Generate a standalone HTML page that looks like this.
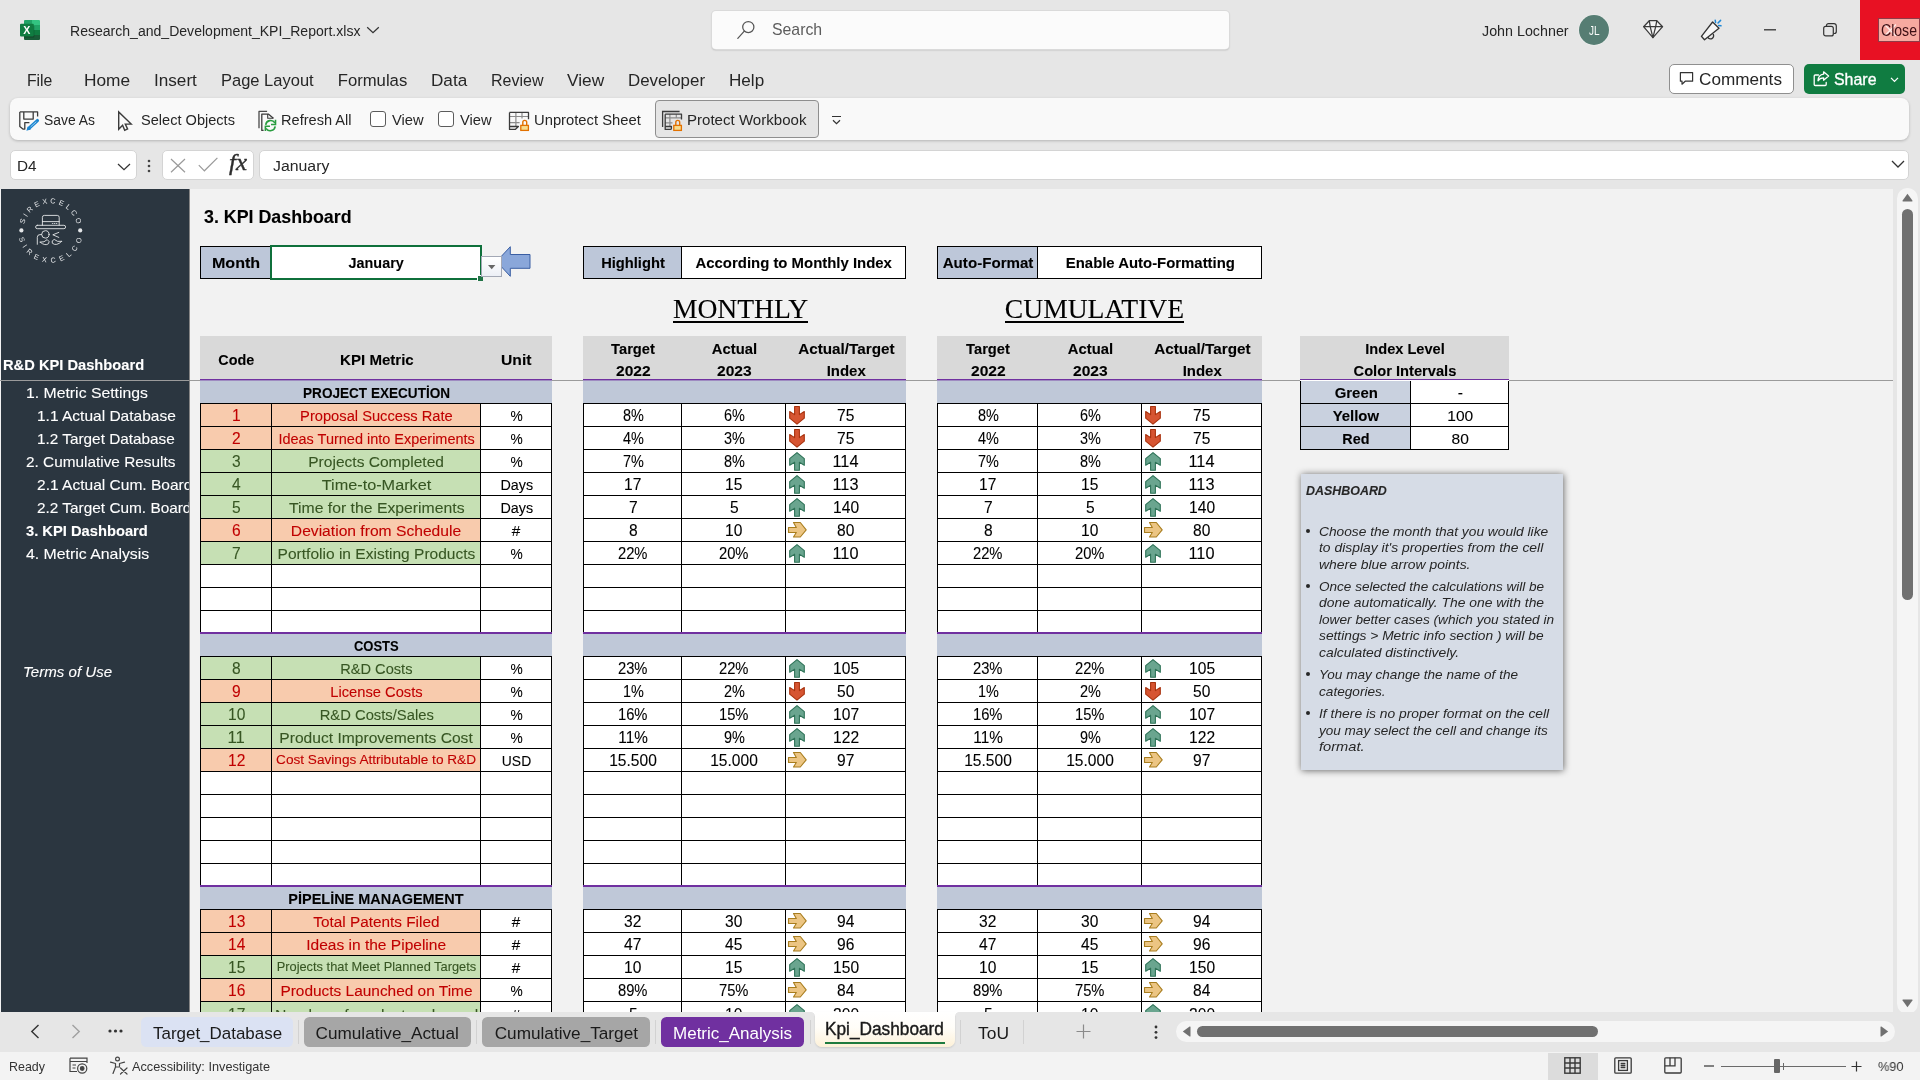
<!DOCTYPE html>
<html lang="en"><head><meta charset="utf-8"><title>Research_and_Development_KPI_Report.xlsx - Excel</title>
<style>
*{box-sizing:border-box;margin:0;padding:0}
html,body{width:1920px;height:1080px;overflow:hidden;background:#e6e6e6;font-family:"Liberation Sans",sans-serif;color:#242424}
.abs,.t,.c{position:absolute}
.t{white-space:nowrap;line-height:1}
svg{position:absolute;overflow:visible}
/* title bar */
#titlebar{position:absolute;left:0;top:0;width:1920px;height:60px;background:#e6e6e6}
#search{position:absolute;left:712px;top:11px;width:517px;height:38px;background:#fbfbfb;border-radius:4px;box-shadow:0 0 0 1px #dadada,0 1px 2px rgba(0,0,0,.28)}
#closebtn{position:absolute;left:1860px;top:0;width:60px;height:60px;background:#e81123}
#closetip{position:absolute;left:1878px;top:18px;width:42px;height:24px;background:#f7a9a0;border:1px solid #8f3b47}
#avatar{position:absolute;left:1579px;top:15px;width:30px;height:30px;border-radius:50%;background:#567d73;box-shadow:0 0 0 0.6px #eef0ef;color:#fff;font-size:11px;text-align:center;line-height:30px}
/* menu */
.menu{position:absolute;top:71px;font-size:17.2px;line-height:1;white-space:nowrap;color:#242424}
#comments{position:absolute;left:1669px;top:64px;width:125px;height:30px;background:#fff;border:1px solid #8f8f8f;border-radius:5px}
#share{position:absolute;left:1804px;top:64px;width:101px;height:30px;background:#107c41;border-radius:5px}
/* toolbar */
#toolbar{position:absolute;left:10px;top:98px;width:1899px;height:42px;background:#f9f9f9;border-radius:8px;box-shadow:0 1px 3px rgba(0,0,0,.22)}
.tb{position:absolute;top:112px;font-size:15.2px;line-height:1;white-space:nowrap;color:#242424}
.chk{position:absolute;top:111px;width:16px;height:16px;border:1px solid #5c5c5c;border-radius:3px;background:#fff}
#pwb{position:absolute;left:655px;top:100px;width:164px;height:38px;background:#e5e5e5;border:1px solid #8e8e8e;border-radius:4px}
/* formula bar */
.fb{position:absolute;top:150px;height:30px;background:#fff;border-radius:5px;border:1px solid #d4d4d4}
/* sheet */
#sheet{position:absolute;left:0;top:189px;width:1893px;height:823px;background:#f2f2f2;overflow:hidden}
#side{position:absolute;left:1px;top:0;width:188px;height:823px;background:#2b3640}
.sv{position:absolute;white-space:nowrap;line-height:1;color:#fff;font-size:14.6px}
.c{font-size:14.6px;line-height:1;white-space:nowrap;text-align:center;color:#000}
.b{font-weight:bold}
.hl{position:absolute;background:#000;height:1px}
.vl{position:absolute;background:#000;width:1px}
.red{background:#f8cbad}.green{background:#c6e0b4}
.tr{color:#c00000}.tg{color:#375623}
#root{position:absolute;left:0;top:0;width:1920px;height:1080px;will-change:transform}

#sheet .t{-webkit-text-stroke:0.1px currentColor}

</style></head>
<body>
<div id="root">
<div id="titlebar">
<svg style="left:20px;top:20px" width="20" height="20" viewBox="0 0 20 20">
<path d="M5 0H12V5H4V1a1 1 0 0 1 1-1z" fill="#21a366"/><path d="M12 0h7a1 1 0 0 1 1 1v4h-8z" fill="#33c481"/>
<rect x="4" y="5" width="8" height="5" fill="#107c41"/><rect x="12" y="5" width="8" height="5" fill="#21a366"/>
<rect x="4" y="10" width="8" height="5" fill="#185c37"/><rect x="12" y="10" width="8" height="5" fill="#107c41"/>
<path d="M4 15h16v4a1 1 0 0 1-1 1H5a1 1 0 0 1-1-1z" fill="#185c37"/>
<path d="M4 6V17.5H13.3a1 1 0 0 0 1-1V6Z" fill="#000" opacity=".25"/>
<rect x="0" y="3.8" width="13.8" height="12.8" rx="1" fill="#107c41"/>
<text x="6.9" y="13.9" font-family="Liberation Sans,sans-serif" font-size="10.6" font-weight="bold" fill="#fff" text-anchor="middle">X</text>
</svg>
<div class="t" style="left:70.30px;top:23px;font-size:15.3px;transform:scaleX(0.9182);transform-origin:left center;color:#262626;">Research_and_Development_KPI_Report.xlsx</div>
<svg style="left:366px;top:26px" width="14" height="8"><path d="M1.2 1.2L7 6.6L12.8 1.2" fill="none" stroke="#333" stroke-width="1.25"/></svg>
<div id="search"></div>
<svg style="left:736px;top:20px" width="20" height="20"><circle cx="12.3" cy="7.1" r="5.6" fill="none" stroke="#555" stroke-width="1.25"/><path d="M8.3 11.2L1.8 18.4" stroke="#555" stroke-width="1.25" stroke-linecap="round"/></svg>
<div class="t" style="left:772.00px;top:22px;font-size:16.6px;transform:scaleX(0.9544);transform-origin:left center;color:#5c5c5c;">Search</div>
<div class="t" style="left:1481.60px;top:23px;font-size:15.3px;transform:scaleX(0.9340);transform-origin:left center;color:#262626;">John Lochner</div>
<div id="avatar"></div>
<div class="t" style="left:1588.60px;top:25px;font-size:12.7px;transform:scaleX(0.7903);transform-origin:left center;color:#fbfdfc;">JL</div>
<svg style="left:1643px;top:20px" width="21" height="19" fill="none" stroke="#3a3a3a" stroke-width="1.25" stroke-linejoin="round"><path d="M6.3 0.7H13.8L19.6 6.7L9.9 17.6L0.6 6.7Z" fill="#f4f4f4"/><path d="M0.6 6.7H19.6M6.3 0.7L7.2 6.7L9.9 17.6L12.7 6.7L13.8 0.7"/></svg>
<svg style="left:1700px;top:19px" width="23" height="23" fill="none" stroke="#333" stroke-width="1.3" stroke-linejoin="round" stroke-linecap="round"><path d="M7.8 18.2A3 3 0 0 0 13.3 15.4"/><path d="M12.6 3L19 9.2L4.5 20.7L1.4 17.3Z" fill="#f6f6f6"/><path d="M15.2 1.2L15.6 3.4M20.6 1.4L18 4M18.6 6.4L21 6.8" stroke="#1e88d6" stroke-width="1.5"/></svg>
<svg style="left:1764px;top:29px" width="12" height="2"><path d="M0 0.8H12" stroke="#333" stroke-width="1.3"/></svg>
<svg style="left:1823px;top:23px" width="14" height="14" fill="none" stroke="#333" stroke-width="1.2"><rect x="0.7" y="3.3" width="9.6" height="9.6" rx="2"/><path d="M3.5 3.2V2.6a2 2 0 0 1 2-2h5.5a2.3 2.3 0 0 1 2.3 2.3v5.6a2 2 0 0 1-2 2h-0.8"/></svg>
<div id="closebtn"></div>
<div id="closetip"></div>
<svg style="left:1884px;top:24px" width="13" height="13"><path d="M0.5 0.5L12 12M12 0.5L0.5 12" stroke="#fff" stroke-width="1.2" opacity=".8"/></svg>
<div class="t" style="left:1881.30px;top:23px;font-size:15.8px;transform:scaleX(0.8912);transform-origin:left center;color:#3d0f14;">Close</div>
</div>
<!-- menu -->
<div class="t" style="left:26.70px;top:73px;font-size:16.7px;transform:scaleX(0.9439);transform-origin:left center;color:#262626;">File</div>
<div class="t" style="left:83.70px;top:73px;font-size:16.7px;transform:scaleX(1.0371);transform-origin:left center;color:#262626;">Home</div>
<div class="t" style="left:153.70px;top:73px;font-size:16.7px;transform:scaleX(1.0271);transform-origin:left center;color:#262626;">Insert</div>
<div class="t" style="left:220.70px;top:73px;font-size:16.7px;transform:scaleX(0.9885);transform-origin:left center;color:#262626;">Page Layout</div>
<div class="t" style="left:337.70px;top:73px;font-size:16.7px;color:#262626;">Formulas</div>
<div class="t" style="left:430.50px;top:73px;font-size:16.7px;transform:scaleX(1.0262);transform-origin:left center;color:#262626;">Data</div>
<div class="t" style="left:490.90px;top:73px;font-size:16.7px;transform:scaleX(0.9588);transform-origin:left center;color:#262626;">Review</div>
<div class="t" style="left:567.40px;top:73px;font-size:16.7px;transform:scaleX(1.0363);transform-origin:left center;color:#262626;">View</div>
<div class="t" style="left:627.90px;top:73px;font-size:16.7px;transform:scaleX(1.0129);transform-origin:left center;color:#262626;">Developer</div>
<div class="t" style="left:728.70px;top:73px;font-size:16.7px;transform:scaleX(1.0249);transform-origin:left center;color:#262626;">Help</div>
<div id="comments"></div>
<svg style="left:1679px;top:71px" width="16" height="15" fill="none" stroke="#333" stroke-width="1.2" stroke-linejoin="round"><path d="M1.4 1.6H13.6V10.2H6.2L3 13.2V10.2H1.4Z"/></svg>
<div class="t" style="left:1699.00px;top:72px;font-size:16.6px;transform:scaleX(1.0342);transform-origin:left center;color:#262626;">Comments</div>
<div id="share"></div>
<svg style="left:1813px;top:70px" width="18" height="17" fill="none" stroke="#fff" stroke-width="1.3" stroke-linejoin="round" stroke-linecap="round"><path d="M5.5 5H2.2a1 1 0 0 0-1 1v8.5a1 1 0 0 0 1 1h10a1 1 0 0 0 1-1V12.4"/><path d="M10.6 1.8L15.6 6L10.6 10.2V7.8C7.8 7.8 6.2 8.8 5 10.8C5.2 7 7.4 4.6 10.6 4.2Z"/></svg>
<div class="t" style="left:1834.20px;top:72px;font-size:16.6px;transform:scaleX(0.9594);transform-origin:left center;color:#fff;-webkit-text-stroke:0.35px #fff;">Share</div>
<svg style="left:1890px;top:77px" width="9" height="6"><path d="M1 0.9L4.5 4.4L8 0.9" fill="none" stroke="#fff" stroke-width="1.3"/></svg>
<!-- toolbar -->
<div id="toolbar"></div>
<svg style="left:19px;top:110px" width="22" height="22" fill="none"><path d="M0.8 1.9H18.6V6.6M0.8 1.9V16.6L3.9 19.1H5.8V12.6H10.4M4.8 1.9V9.1H14.2V1.9" stroke="#3b3b3b" stroke-width="1.3" stroke-linejoin="round"/><path d="M10 18.3L18.4 10.6" stroke="#1b86d1" stroke-width="3.3" stroke-linecap="round"/><path d="M7.4 20.8L8.8 16.6L11.8 19.4Z" fill="#1b86d1"/><path d="M11.6 16.9L17.3 11.7" stroke="#a9d6f3" stroke-width="0.9"/></svg>
<div class="t" style="left:44.00px;top:112px;font-size:15.4px;transform:scaleX(0.9026);transform-origin:left center;color:#262626;">Save As</div>
<svg style="left:117px;top:110px" width="16" height="22" fill="none" stroke="#3b3b3b" stroke-width="1.4" stroke-linejoin="miter"><path d="M1.7 2V19.2L5.6 15.3L7.7 20.3L10.6 18.9L8.3 14.1H14.2Z"/></svg>
<div class="t" style="left:141.00px;top:112px;font-size:15.4px;transform:scaleX(0.9467);transform-origin:left center;color:#262626;">Select Objects</div>
<svg style="left:257px;top:109px" width="22" height="24" fill="none" stroke="#3b3b3b" stroke-width="1.3" stroke-linejoin="round"><path d="M2 19.3V2.4H10.1" stroke="#4a4a4a"/><path d="M6.6 21.4H4.8V5.1H11.3L16.4 9.2"/><path d="M10.7 5.1V9.2H16.4" stroke-width="1.1"/><g stroke="#2a9d40" stroke-width="1.6" stroke-linejoin="miter"><path d="M8.7 15.8A5 5 0 0 1 17.9 13.9"/><path d="M18.5 10.8V15.5H14"/><path d="M18.2 17.3A5 5 0 0 1 9 19.3"/><path d="M8.4 22V17.3H13"/></g></svg>
<div class="t" style="left:281.00px;top:112px;font-size:15.4px;transform:scaleX(0.9467);transform-origin:left center;color:#262626;">Refresh All</div>
<div class="chk" style="left:370px"></div>
<div class="t" style="left:392.30px;top:112px;font-size:15.4px;transform:scaleX(0.9546);transform-origin:left center;color:#262626;">View</div>
<div class="chk" style="left:438px"></div>
<div class="t" style="left:460.30px;top:112px;font-size:15.4px;transform:scaleX(0.9546);transform-origin:left center;color:#262626;">View</div>
<svg style="left:509px;top:110px" width="22" height="22" fill="none" stroke="#3b3b3b" stroke-width="1.3"><path d="M0.5 6.5H19.5M0.5 12.7H10.6M6.9 2.4V16.5M13 2.4V8.5" stroke="#8c8c8c" stroke-width="1.2"/><path d="M0.5 2.4H19.5V9.2M0.5 2.4V19.4H6.2L9.4 16.5H0.5" stroke-linejoin="round"/><rect x="11.8" y="15.4" width="7.6" height="5" fill="#f7dc8e" stroke="#e27100" stroke-width="1.3"/><path d="M13.8 15.2V12.3a1.95 1.95 0 0 1 3.9 0V15.2" stroke="#e27100" stroke-width="1.4"/></svg>
<div class="t" style="left:534.20px;top:112px;font-size:15.4px;transform:scaleX(0.9597);transform-origin:left center;color:#262626;">Unprotect Sheet</div>
<div id="pwb"></div>
<svg style="left:662px;top:110px" width="22" height="22" fill="none" stroke="#3b3b3b" stroke-width="1.3"><path d="M3.2 7.8H19.5M3.2 12.8H10.5M7.9 4.2V16.5M14.3 4.2V8.5" stroke="#8c8c8c" stroke-width="1.2"/><path d="M0.6 17V1.5H17.6"/><path d="M3.2 4.2H19.5V9.4M3.2 4.2V19.4H8.2Q9.4 19.4 9.4 18.2V16.5H3.2" stroke-linejoin="round"/><rect x="11.8" y="15.4" width="7.6" height="5" fill="#f7dc8e" stroke="#e27100" stroke-width="1.3"/><path d="M13.8 15.2V12.3a1.95 1.95 0 0 1 3.9 0V15.2" stroke="#e27100" stroke-width="1.4"/></svg>
<div class="t" style="left:687.20px;top:112px;font-size:15.4px;transform:scaleX(0.9786);transform-origin:left center;color:#262626;">Protect Workbook</div>
<svg style="left:831px;top:115px" width="11" height="10" fill="none" stroke="#333" stroke-width="1.2"><path d="M1 1.5H10M2 5.2L5.5 8.6L9 5.2"/></svg>
<!-- formula bar -->
<div class="fb" style="left:10px;width:127px"></div>
<div class="t" style="left:17.40px;top:158px;font-size:15.4px;transform:scaleX(0.9956);transform-origin:left center;color:#262626;">D4</div>
<svg style="left:117px;top:163px" width="14" height="8"><path d="M1 1L7 6.6L13 1" fill="none" stroke="#333" stroke-width="1.25"/></svg>
<svg style="left:147px;top:159px" width="4" height="14" fill="#444"><circle cx="2" cy="2" r="1.3"/><circle cx="2" cy="7" r="1.3"/><circle cx="2" cy="12" r="1.3"/></svg>
<div class="fb" style="left:162px;width:92px"></div>
<svg style="left:170px;top:158px" width="16" height="15"><path d="M1 1L15 14.3M15 1L1 14.3" stroke="#9a9a9a" stroke-width="1.2"/></svg>
<svg style="left:198px;top:157px" width="20" height="15"><path d="M0.8 8.2L6.4 13.8L19.4 0.9" fill="none" stroke="#9a9a9a" stroke-width="1.2"/></svg>
<div class="t" style="left:229.30px;top:152px;font-size:22.5px;transform:scaleX(1.1085);transform-origin:left center;color:#2e2e2e;font-style:italic;font-family:'Liberation Serif',serif;-webkit-text-stroke:0.35px #2e2e2e;">fx</div>
<div class="fb" style="left:259px;width:1650px"></div>
<div class="t" style="left:272.60px;top:158px;font-size:15.4px;transform:scaleX(1.0294);transform-origin:left center;color:#262626;">January</div>
<svg style="left:1891px;top:160px" width="14" height="9"><path d="M1 1L7 7L13 1" fill="none" stroke="#333" stroke-width="1.3"/></svg>
<div id="sheet">
<div id="side"></div>
<svg style="left:0;top:0" width="190" height="100" viewBox="0 0 190 100" fill="none" stroke="#e4e6e8" stroke-width="0.9" stroke-linecap="round" stroke-linejoin="round">
<defs>
<path id="arcT" d="M 23.6 41.3 A 26.9 26.9 0 0 1 77.4 41.3"/>
<path id="arcB" d="M 18.1 41.3 A 32.4 32.4 0 0 0 82.9 41.3"/>
</defs>
<g stroke="none" fill="#e4e6e8" font-family="'Liberation Sans',sans-serif" font-size="7.2">
<text text-anchor="middle" letter-spacing="2.8"><textPath href="#arcT" startOffset="51.5%">SIREXCELCO</textPath></text>
<text text-anchor="middle" letter-spacing="4.35"><textPath href="#arcB" startOffset="52%">SIREXCELCO</textPath></text>
<circle cx="21.4" cy="41.4" r="2.1"/><circle cx="80.2" cy="41.4" r="2.1"/>
</g>
<!-- hat -->
<rect x="35.6" y="36.3" width="30" height="3.4" rx="1.7"/>
<path d="M42.4 36.3 V28.3 Q42.4 26.4 44.3 26.4 H57.3 Q59.2 26.4 59.2 28.3 V36.3"/>
<path d="M42.4 32.6 H59.2"/>
<path d="M52.3 34.5 h0.6 M54.3 34.5 h0.6 M56.3 34.5 h0.6" stroke-width="0.8"/>
<!-- monocle + cane -->
<circle cx="45.4" cy="45.4" r="3.7"/>
<path d="M37.3 55.3 V48.3 Q37.3 45.6 40 45.6 H41.6"/>
<path d="M58.8 43.4 L52.8 45.8 L58.8 48.4"/>
<!-- moustache -->
<path d="M40.2 53.2 Q44.5 53.6 47.2 50.6 Q50.2 52.4 48.6 54.6 Q45.3 57.4 40.2 53.2 Z"/>
<path d="M61.6 52.4 Q57.2 53.4 54.2 50.4 Q51.2 51.6 52.3 54.2 Q56.4 57.6 61.6 52.4 Z"/>
</svg>
<div style="position:absolute;left:0;top:0;width:189px;height:823px;overflow:hidden">
<div class="t" style="left:3.30px;top:169px;font-size:14.8px;transform:scaleX(0.9920);transform-origin:left center;color:#fff;font-weight:bold;">R&amp;D KPI Dashboard</div>
<div class="t" style="left:26.00px;top:197px;font-size:14.8px;transform:scaleX(1.0668);transform-origin:left center;color:#fff;">1. Metric Settings</div>
<div class="t" style="left:36.70px;top:220px;font-size:14.8px;transform:scaleX(1.0478);transform-origin:left center;color:#fff;">1.1 Actual Database</div>
<div class="t" style="left:36.70px;top:243px;font-size:14.8px;transform:scaleX(1.0361);transform-origin:left center;color:#fff;">1.2 Target Database</div>
<div class="t" style="left:26.00px;top:266px;font-size:14.8px;transform:scaleX(1.0380);transform-origin:left center;color:#fff;">2. Cumulative Results</div>
<div class="t" style="left:36.70px;top:289px;font-size:14.8px;transform:scaleX(1.0497);transform-origin:left center;color:#fff;">2.1 Actual Cum. Board</div>
<div class="t" style="left:36.70px;top:312px;font-size:14.8px;transform:scaleX(1.0392);transform-origin:left center;color:#fff;">2.2 Target Cum. Board</div>
<div class="t" style="left:26.00px;top:335px;font-size:14.8px;transform:scaleX(0.9939);transform-origin:left center;color:#fff;font-weight:bold;">3. KPI Dashboard</div>
<div class="t" style="left:26.00px;top:358px;font-size:14.8px;transform:scaleX(1.0701);transform-origin:left center;color:#fff;">4. Metric Analysis</div>
<div class="t" style="left:23.30px;top:476px;font-size:14.8px;transform:scaleX(1.0194);transform-origin:left center;color:#fff;font-style:italic;">Terms of Use</div>
</div>
<div class="t" style="left:204.40px;top:20px;font-size:17.9px;transform:scaleX(0.9958);transform-origin:left center;color:#000;font-weight:bold;">3. KPI Dashboard</div>
<div class="abs" style="left:200px;top:57px;width:281px;height:33px;background:#fff;border:1px solid #000;"></div>
<div class="abs" style="left:201px;top:58px;width:70px;height:31px;background:#bdc7d9;"></div>
<div class="vl" style="left:271px;top:58px;height:31px;"></div>
<div class="t" style="left:214.46px;top:67px;font-size:14.7px;transform:scaleX(1.0951);transform-origin:center center;color:#000;font-weight:bold;">Month</div>
<div class="t" style="left:348.31px;top:67px;font-size:14.7px;transform:scaleX(0.9783);transform-origin:center center;color:#000;font-weight:bold;">January</div>
<div class="abs" style="left:583px;top:57px;width:323px;height:33px;background:#fff;border:1px solid #000;"></div>
<div class="abs" style="left:584px;top:58px;width:97px;height:31px;background:#bdc7d9;"></div>
<div class="vl" style="left:681px;top:58px;height:31px;"></div>
<div class="t" style="left:601.16px;top:67px;font-size:14.7px;color:#000;font-weight:bold;">Highlight</div>
<div class="t" style="left:697.23px;top:67px;font-size:14.7px;transform:scaleX(1.0156);transform-origin:center center;color:#000;font-weight:bold;">According to Monthly Index</div>
<div class="abs" style="left:937px;top:57px;width:325px;height:33px;background:#fff;border:1px solid #000;"></div>
<div class="abs" style="left:938px;top:58px;width:99px;height:31px;background:#bdc7d9;"></div>
<div class="vl" style="left:1037px;top:58px;height:31px;"></div>
<div class="t" style="left:943.91px;top:67px;font-size:14.7px;transform:scaleX(1.0294);transform-origin:center center;color:#000;font-weight:bold;">Auto-Format</div>
<div class="t" style="left:1066.57px;top:67px;font-size:14.7px;transform:scaleX(1.0143);transform-origin:center center;color:#000;font-weight:bold;">Enable Auto-Formatting</div>
<div class="abs" style="left:270px;top:56px;width:212px;height:35px;border:2px solid #0f703b"></div>
<div class="abs" style="left:477px;top:86px;width:6px;height:6px;background:#217346;border-left:1px solid #fff;border-top:1px solid #fff;box-sizing:content-box;width:5px;height:5px"></div>
<svg style="left:490px;top:51px" width="45" height="42"><path d="M6.5 21.5 L20.3 6.7 V14.5 H40 V28.3 H20.3 V36.3 Z" fill="#8aa7da" stroke="#3a5ea3" stroke-width="1" stroke-linejoin="miter"/></svg>
<div class="abs" style="left:481px;top:67px;width:21px;height:21px;background:linear-gradient(#ffffff,#f7f8fb 50%,#eceff6);border:1px solid #a3a8b5"></div>
<svg style="left:488px;top:76px" width="8" height="5"><path d="M0 0 H7.4 L3.7 4.2Z" fill="#666"/></svg>
<div class="t" style="left:672.89px;top:106px;font-size:27.6px;color:#000;font-family:'Liberation Serif',serif;">MONTHLY</div>
<div class="abs" style="left:673px;top:132px;width:135px;height:2px;background:#000;"></div>
<div class="t" style="left:1004.81px;top:106px;font-size:27.6px;color:#000;font-family:'Liberation Serif',serif;">CUMULATIVE</div>
<div class="abs" style="left:1005px;top:132px;width:179px;height:2px;background:#000;"></div>
<div class="hl" style="left:0px;top:191px;width:1893px;background:#9b9b9b;"></div>
<div class="vl" style="left:189px;top:0px;height:823px;background:#858585;"></div>
<div class="abs" style="left:200px;top:147px;width:352px;height:44px;background:#d9d9d9;"></div>
<div class="t" style="left:218.12px;top:164px;font-size:14.7px;transform:scaleX(0.9805);transform-origin:center center;color:#000;font-weight:bold;">Code</div>
<div class="t" style="left:340.56px;top:164px;font-size:14.7px;transform:scaleX(1.0251);transform-origin:center center;color:#000;font-weight:bold;">KPI Metric</div>
<div class="t" style="left:502.21px;top:164px;font-size:14.7px;transform:scaleX(1.0664);transform-origin:center center;color:#000;font-weight:bold;">Unit</div>
<div class="abs" style="left:200px;top:191px;width:352px;height:23px;background:#bfc8d8;"></div>
<div class="t" style="left:296.86px;top:197px;font-size:14.7px;transform:scaleX(0.9237);transform-origin:center center;color:#000;font-weight:bold;">PROJECT EXECUTİON</div>
<div class="abs" style="left:200px;top:445px;width:352px;height:22px;background:#bfc8d8;"></div>
<div class="t" style="left:351.18px;top:450px;font-size:14.7px;transform:scaleX(0.8862);transform-origin:center center;color:#000;font-weight:bold;">COSTS</div>
<div class="abs" style="left:200px;top:698px;width:352px;height:22px;background:#bfc8d8;"></div>
<div class="t" style="left:287.48px;top:703px;font-size:14.7px;transform:scaleX(0.9850);transform-origin:center center;color:#000;font-weight:bold;">PİPELİNE MANAGEMENT</div>
<div class="hl" style="left:200px;top:190px;width:352px;background:#7030a0;"></div>
<div class="hl" style="left:200px;top:191px;width:352px;background:rgba(112,48,160,.4);"></div>
<div class="abs" style="left:200px;top:214px;width:352px;height:231px;background:#fff;"></div>
<div class="abs red" style="left:201px;top:215px;width:279px;height:22px"></div>
<div class="t" style="left:232.13px;top:219px;font-size:15.7px;transform:scaleX(0.9928);transform-origin:center center;color:#c00000;">1</div>
<div class="t" style="left:300.10px;top:220px;font-size:14.7px;color:#c00000;">Proposal Success Rate</div>
<div class="t" style="left:509.96px;top:220px;font-size:14.7px;transform:scaleX(0.9354);transform-origin:center center;color:#000;">%</div>
<div class="abs red" style="left:201px;top:238px;width:279px;height:22px"></div>
<div class="t" style="left:232.13px;top:242px;font-size:15.7px;transform:scaleX(0.9928);transform-origin:center center;color:#c00000;">2</div>
<div class="t" style="left:276.81px;top:243px;font-size:14.7px;transform:scaleX(0.9856);transform-origin:center center;color:#c00000;">Ideas Turned into Experiments</div>
<div class="t" style="left:509.96px;top:243px;font-size:14.7px;transform:scaleX(0.9354);transform-origin:center center;color:#000;">%</div>
<div class="abs green" style="left:201px;top:261px;width:279px;height:22px"></div>
<div class="t" style="left:232.13px;top:265px;font-size:15.7px;transform:scaleX(0.9928);transform-origin:center center;color:#375623;">3</div>
<div class="t" style="left:312.36px;top:266px;font-size:14.7px;transform:scaleX(1.0589);transform-origin:center center;color:#375623;">Projects Completed</div>
<div class="t" style="left:509.96px;top:266px;font-size:14.7px;transform:scaleX(0.9354);transform-origin:center center;color:#000;">%</div>
<div class="abs green" style="left:201px;top:284px;width:279px;height:22px"></div>
<div class="t" style="left:232.13px;top:288px;font-size:15.7px;transform:scaleX(0.9928);transform-origin:center center;color:#375623;">4</div>
<div class="t" style="left:326.95px;top:289px;font-size:14.7px;transform:scaleX(1.1063);transform-origin:center center;color:#375623;">Time-to-Market</div>
<div class="t" style="left:499.75px;top:289px;font-size:14.7px;transform:scaleX(0.9754);transform-origin:center center;color:#000;">Days</div>
<div class="abs green" style="left:201px;top:307px;width:279px;height:22px"></div>
<div class="t" style="left:232.13px;top:311px;font-size:15.7px;transform:scaleX(0.9928);transform-origin:center center;color:#375623;">5</div>
<div class="t" style="left:294.67px;top:312px;font-size:14.7px;transform:scaleX(1.0733);transform-origin:center center;color:#375623;">Time for the Experiments</div>
<div class="t" style="left:499.75px;top:312px;font-size:14.7px;transform:scaleX(0.9754);transform-origin:center center;color:#000;">Days</div>
<div class="abs red" style="left:201px;top:330px;width:279px;height:22px"></div>
<div class="t" style="left:232.13px;top:334px;font-size:15.7px;transform:scaleX(0.9928);transform-origin:center center;color:#c00000;">6</div>
<div class="t" style="left:296.42px;top:335px;font-size:14.7px;transform:scaleX(1.0645);transform-origin:center center;color:#c00000;">Deviation from Schedule</div>
<div class="t" style="left:512.41px;top:335px;font-size:14.7px;transform:scaleX(1.0419);transform-origin:center center;color:#000;">#</div>
<div class="abs green" style="left:201px;top:353px;width:279px;height:22px"></div>
<div class="t" style="left:232.13px;top:357px;font-size:15.7px;transform:scaleX(0.9928);transform-origin:center center;color:#375623;">7</div>
<div class="t" style="left:282.95px;top:358px;font-size:14.7px;transform:scaleX(1.0577);transform-origin:center center;color:#375623;">Portfolio in Existing Products</div>
<div class="t" style="left:509.96px;top:358px;font-size:14.7px;transform:scaleX(0.9354);transform-origin:center center;color:#000;">%</div>
<div class="hl" style="left:200px;top:214px;width:352px;"></div>
<div class="hl" style="left:200px;top:237px;width:352px;"></div>
<div class="hl" style="left:200px;top:260px;width:352px;"></div>
<div class="hl" style="left:200px;top:283px;width:352px;"></div>
<div class="hl" style="left:200px;top:306px;width:352px;"></div>
<div class="hl" style="left:200px;top:329px;width:352px;"></div>
<div class="hl" style="left:200px;top:352px;width:352px;"></div>
<div class="hl" style="left:200px;top:375px;width:352px;"></div>
<div class="hl" style="left:200px;top:398px;width:352px;"></div>
<div class="hl" style="left:200px;top:421px;width:352px;"></div>
<div class="hl" style="left:200px;top:443px;width:352px;height:2px;background:#7030a0;"></div>
<div class="vl" style="left:200px;top:214px;height:229px;"></div>
<div class="vl" style="left:271px;top:214px;height:229px;"></div>
<div class="vl" style="left:480px;top:214px;height:229px;"></div>
<div class="vl" style="left:551px;top:214px;height:229px;"></div>
<div class="abs" style="left:200px;top:467px;width:352px;height:231px;background:#fff;"></div>
<div class="abs green" style="left:201px;top:468px;width:279px;height:22px"></div>
<div class="t" style="left:232.13px;top:472px;font-size:15.7px;transform:scaleX(0.9928);transform-origin:center center;color:#375623;">8</div>
<div class="t" style="left:340.15px;top:473px;font-size:14.7px;transform:scaleX(0.9958);transform-origin:center center;color:#375623;">R&amp;D Costs</div>
<div class="t" style="left:509.96px;top:473px;font-size:14.7px;transform:scaleX(0.9354);transform-origin:center center;color:#000;">%</div>
<div class="abs red" style="left:201px;top:491px;width:279px;height:22px"></div>
<div class="t" style="left:232.13px;top:495px;font-size:15.7px;transform:scaleX(0.9928);transform-origin:center center;color:#c00000;">9</div>
<div class="t" style="left:330.34px;top:496px;font-size:14.7px;color:#c00000;">License Costs</div>
<div class="t" style="left:509.96px;top:496px;font-size:14.7px;transform:scaleX(0.9354);transform-origin:center center;color:#000;">%</div>
<div class="abs green" style="left:201px;top:514px;width:279px;height:22px"></div>
<div class="t" style="left:227.77px;top:518px;font-size:15.7px;transform:scaleX(0.9928);transform-origin:center center;color:#375623;">10</div>
<div class="t" style="left:319.72px;top:519px;font-size:14.7px;transform:scaleX(1.0055);transform-origin:center center;color:#375623;">R&amp;D Costs/Sales</div>
<div class="t" style="left:509.96px;top:519px;font-size:14.7px;transform:scaleX(0.9354);transform-origin:center center;color:#000;">%</div>
<div class="abs green" style="left:201px;top:537px;width:279px;height:22px"></div>
<div class="t" style="left:228.35px;top:541px;font-size:15.7px;transform:scaleX(1.0637);transform-origin:center center;color:#375623;">11</div>
<div class="t" style="left:285.41px;top:542px;font-size:14.7px;transform:scaleX(1.0629);transform-origin:center center;color:#375623;">Product Improvements Cost</div>
<div class="t" style="left:509.96px;top:542px;font-size:14.7px;transform:scaleX(0.9354);transform-origin:center center;color:#000;">%</div>
<div class="abs red" style="left:201px;top:560px;width:279px;height:22px"></div>
<div class="t" style="left:227.77px;top:564px;font-size:15.7px;transform:scaleX(0.9928);transform-origin:center center;color:#c00000;">12</div>
<div class="t" style="left:288.46px;top:565px;font-size:12.0px;transform:scaleX(1.1358);transform-origin:center center;color:#c00000;">Cost Savings Attributable to R&amp;D</div>
<div class="t" style="left:500.98px;top:565px;font-size:14.7px;transform:scaleX(0.9458);transform-origin:center center;color:#000;">USD</div>
<div class="hl" style="left:200px;top:467px;width:352px;"></div>
<div class="hl" style="left:200px;top:490px;width:352px;"></div>
<div class="hl" style="left:200px;top:513px;width:352px;"></div>
<div class="hl" style="left:200px;top:536px;width:352px;"></div>
<div class="hl" style="left:200px;top:559px;width:352px;"></div>
<div class="hl" style="left:200px;top:582px;width:352px;"></div>
<div class="hl" style="left:200px;top:605px;width:352px;"></div>
<div class="hl" style="left:200px;top:628px;width:352px;"></div>
<div class="hl" style="left:200px;top:651px;width:352px;"></div>
<div class="hl" style="left:200px;top:674px;width:352px;"></div>
<div class="hl" style="left:200px;top:696px;width:352px;height:2px;background:#7030a0;"></div>
<div class="vl" style="left:200px;top:467px;height:229px;"></div>
<div class="vl" style="left:271px;top:467px;height:229px;"></div>
<div class="vl" style="left:480px;top:467px;height:229px;"></div>
<div class="vl" style="left:551px;top:467px;height:229px;"></div>
<div class="abs" style="left:200px;top:720px;width:352px;height:105px;background:#fff;"></div>
<div class="abs red" style="left:201px;top:721px;width:279px;height:22px"></div>
<div class="t" style="left:227.77px;top:725px;font-size:15.7px;transform:scaleX(0.9928);transform-origin:center center;color:#c00000;">13</div>
<div class="t" style="left:316.03px;top:726px;font-size:14.7px;transform:scaleX(1.0437);transform-origin:center center;color:#c00000;">Total Patents Filed</div>
<div class="t" style="left:512.41px;top:726px;font-size:14.7px;transform:scaleX(1.0419);transform-origin:center center;color:#000;">#</div>
<div class="abs red" style="left:201px;top:744px;width:279px;height:22px"></div>
<div class="t" style="left:227.77px;top:748px;font-size:15.7px;transform:scaleX(0.9928);transform-origin:center center;color:#c00000;">14</div>
<div class="t" style="left:310.30px;top:749px;font-size:14.7px;transform:scaleX(1.0576);transform-origin:center center;color:#c00000;">Ideas in the Pipeline</div>
<div class="t" style="left:512.41px;top:749px;font-size:14.7px;transform:scaleX(1.0419);transform-origin:center center;color:#000;">#</div>
<div class="abs green" style="left:201px;top:767px;width:279px;height:22px"></div>
<div class="t" style="left:227.77px;top:771px;font-size:15.7px;transform:scaleX(0.9928);transform-origin:center center;color:#375623;">15</div>
<div class="t" style="left:284.00px;top:773px;font-size:11.9px;transform:scaleX(1.0795);transform-origin:center center;color:#375623;">Projects that Meet Planned Targets</div>
<div class="t" style="left:512.41px;top:772px;font-size:14.7px;transform:scaleX(1.0419);transform-origin:center center;color:#000;">#</div>
<div class="abs red" style="left:201px;top:790px;width:279px;height:22px"></div>
<div class="t" style="left:227.77px;top:794px;font-size:15.7px;transform:scaleX(0.9928);transform-origin:center center;color:#c00000;">16</div>
<div class="t" style="left:284.98px;top:795px;font-size:14.7px;transform:scaleX(1.0504);transform-origin:center center;color:#c00000;">Products Launched on Time</div>
<div class="t" style="left:509.96px;top:795px;font-size:14.7px;transform:scaleX(0.9354);transform-origin:center center;color:#000;">%</div>
<div class="abs green" style="left:201px;top:813px;width:279px;height:22px"></div>
<div class="t" style="left:227.77px;top:818px;font-size:15.7px;transform:scaleX(0.9928);transform-origin:center center;color:#375623;">17</div>
<div class="t" style="left:281.72px;top:819px;font-size:14.7px;transform:scaleX(1.0727);transform-origin:center center;color:#375623;">Number of products released</div>
<div class="t" style="left:512.41px;top:819px;font-size:14.7px;transform:scaleX(1.0419);transform-origin:center center;color:#000;">#</div>
<div class="hl" style="left:200px;top:720px;width:352px;"></div>
<div class="hl" style="left:200px;top:743px;width:352px;"></div>
<div class="hl" style="left:200px;top:766px;width:352px;"></div>
<div class="hl" style="left:200px;top:789px;width:352px;"></div>
<div class="hl" style="left:200px;top:812px;width:352px;"></div>
<div class="vl" style="left:200px;top:720px;height:105px;"></div>
<div class="vl" style="left:271px;top:720px;height:105px;"></div>
<div class="vl" style="left:480px;top:720px;height:105px;"></div>
<div class="vl" style="left:551px;top:720px;height:105px;"></div>
<div class="abs" style="left:583px;top:147px;width:323px;height:44px;background:#d9d9d9;"></div>
<div class="t" style="left:611.08px;top:153px;font-size:14.7px;color:#000;font-weight:bold;">Target</div>
<div class="t" style="left:616.65px;top:175px;font-size:14.7px;transform:scaleX(1.0603);transform-origin:center center;color:#000;font-weight:bold;">2022</div>
<div class="t" style="left:711.54px;top:153px;font-size:14.7px;transform:scaleX(1.0077);transform-origin:center center;color:#000;font-weight:bold;">Actual</div>
<div class="t" style="left:717.65px;top:175px;font-size:14.7px;transform:scaleX(1.0603);transform-origin:center center;color:#000;font-weight:bold;">2023</div>
<div class="t" style="left:799.58px;top:153px;font-size:14.7px;transform:scaleX(1.0390);transform-origin:center center;color:#000;font-weight:bold;">Actual/Target</div>
<div class="t" style="left:826.80px;top:175px;font-size:14.7px;transform:scaleX(1.0188);transform-origin:center center;color:#000;font-weight:bold;">Index</div>
<div class="abs" style="left:583px;top:191px;width:323px;height:23px;background:#bfc8d8;"></div>
<div class="abs" style="left:583px;top:445px;width:323px;height:22px;background:#bfc8d8;"></div>
<div class="abs" style="left:583px;top:698px;width:323px;height:22px;background:#bfc8d8;"></div>
<div class="hl" style="left:583px;top:190px;width:323px;background:#7030a0;"></div>
<div class="hl" style="left:583px;top:191px;width:323px;background:rgba(112,48,160,.4);"></div>
<div class="abs" style="left:583px;top:214px;width:323px;height:231px;background:#fff;"></div>
<div class="t" style="left:621.65px;top:219px;font-size:15.7px;transform:scaleX(0.9208);transform-origin:center center;color:#000;">8%</div>
<div class="t" style="left:722.65px;top:219px;font-size:15.7px;transform:scaleX(0.9208);transform-origin:center center;color:#000;">6%</div>
<div class="t" style="left:837.27px;top:219px;font-size:15.7px;transform:scaleX(0.9928);transform-origin:center center;color:#000;">75</div>
<svg style="left:788px;top:216px" width="22" height="21"><path d="M6.6 1.5 H11.4 V9.6 L16.3 6.5 V13.2 L9 19.2 L1.7 13.2 V6.5 L6.6 9.6 Z" fill="#d65532" stroke="#a8330f" stroke-width="1.1" stroke-linejoin="round"/></svg>
<div class="t" style="left:621.65px;top:242px;font-size:15.7px;transform:scaleX(0.9208);transform-origin:center center;color:#000;">4%</div>
<div class="t" style="left:722.65px;top:242px;font-size:15.7px;transform:scaleX(0.9208);transform-origin:center center;color:#000;">3%</div>
<div class="t" style="left:837.27px;top:242px;font-size:15.7px;transform:scaleX(0.9928);transform-origin:center center;color:#000;">75</div>
<svg style="left:788px;top:239px" width="22" height="21"><path d="M6.6 1.5 H11.4 V9.6 L16.3 6.5 V13.2 L9 19.2 L1.7 13.2 V6.5 L6.6 9.6 Z" fill="#d65532" stroke="#a8330f" stroke-width="1.1" stroke-linejoin="round"/></svg>
<div class="t" style="left:621.65px;top:265px;font-size:15.7px;transform:scaleX(0.9208);transform-origin:center center;color:#000;">7%</div>
<div class="t" style="left:722.65px;top:265px;font-size:15.7px;transform:scaleX(0.9208);transform-origin:center center;color:#000;">8%</div>
<div class="t" style="left:833.49px;top:265px;font-size:15.7px;transform:scaleX(1.0390);transform-origin:center center;color:#000;">114</div>
<svg style="left:788px;top:262px" width="22" height="21"><path d="M6.6 19.3 H11.4 V11.2 L16.3 14.3 V7.6 L9 1.6 L1.7 7.6 V14.3 L6.6 11.2 Z" fill="#6aa58f" stroke="#2f7358" stroke-width="1.1" stroke-linejoin="round"/></svg>
<div class="t" style="left:624.27px;top:288px;font-size:15.7px;transform:scaleX(0.9928);transform-origin:center center;color:#000;">17</div>
<div class="t" style="left:725.27px;top:288px;font-size:15.7px;transform:scaleX(0.9928);transform-origin:center center;color:#000;">15</div>
<div class="t" style="left:833.49px;top:288px;font-size:15.7px;transform:scaleX(1.0390);transform-origin:center center;color:#000;">113</div>
<svg style="left:788px;top:285px" width="22" height="21"><path d="M6.6 19.3 H11.4 V11.2 L16.3 14.3 V7.6 L9 1.6 L1.7 7.6 V14.3 L6.6 11.2 Z" fill="#6aa58f" stroke="#2f7358" stroke-width="1.1" stroke-linejoin="round"/></svg>
<div class="t" style="left:628.63px;top:311px;font-size:15.7px;transform:scaleX(0.9928);transform-origin:center center;color:#000;">7</div>
<div class="t" style="left:729.63px;top:311px;font-size:15.7px;transform:scaleX(0.9928);transform-origin:center center;color:#000;">5</div>
<div class="t" style="left:832.90px;top:311px;font-size:15.7px;transform:scaleX(0.9928);transform-origin:center center;color:#000;">140</div>
<svg style="left:788px;top:308px" width="22" height="21"><path d="M6.6 19.3 H11.4 V11.2 L16.3 14.3 V7.6 L9 1.6 L1.7 7.6 V14.3 L6.6 11.2 Z" fill="#6aa58f" stroke="#2f7358" stroke-width="1.1" stroke-linejoin="round"/></svg>
<div class="t" style="left:628.63px;top:334px;font-size:15.7px;transform:scaleX(0.9928);transform-origin:center center;color:#000;">8</div>
<div class="t" style="left:725.27px;top:334px;font-size:15.7px;transform:scaleX(0.9928);transform-origin:center center;color:#000;">10</div>
<div class="t" style="left:837.27px;top:334px;font-size:15.7px;transform:scaleX(0.9928);transform-origin:center center;color:#000;">80</div>
<svg style="left:788px;top:331px" width="22" height="21"><path d="M0.5 7.5 H8.3 L5.5 2.5 H12.3 L18.2 9.8 L12.3 17 H5.5 L8.3 12.5 H0.5 Z" fill="#ecc583" stroke="#a87d1e" stroke-width="1.1" stroke-linejoin="round"/></svg>
<div class="t" style="left:617.29px;top:357px;font-size:15.7px;transform:scaleX(0.9408);transform-origin:center center;color:#000;">22%</div>
<div class="t" style="left:718.29px;top:357px;font-size:15.7px;transform:scaleX(0.9408);transform-origin:center center;color:#000;">20%</div>
<div class="t" style="left:833.49px;top:357px;font-size:15.7px;transform:scaleX(1.0390);transform-origin:center center;color:#000;">110</div>
<svg style="left:788px;top:354px" width="22" height="21"><path d="M6.6 19.3 H11.4 V11.2 L16.3 14.3 V7.6 L9 1.6 L1.7 7.6 V14.3 L6.6 11.2 Z" fill="#6aa58f" stroke="#2f7358" stroke-width="1.1" stroke-linejoin="round"/></svg>
<div class="hl" style="left:583px;top:214px;width:323px;"></div>
<div class="hl" style="left:583px;top:237px;width:323px;"></div>
<div class="hl" style="left:583px;top:260px;width:323px;"></div>
<div class="hl" style="left:583px;top:283px;width:323px;"></div>
<div class="hl" style="left:583px;top:306px;width:323px;"></div>
<div class="hl" style="left:583px;top:329px;width:323px;"></div>
<div class="hl" style="left:583px;top:352px;width:323px;"></div>
<div class="hl" style="left:583px;top:375px;width:323px;"></div>
<div class="hl" style="left:583px;top:398px;width:323px;"></div>
<div class="hl" style="left:583px;top:421px;width:323px;"></div>
<div class="hl" style="left:583px;top:443px;width:323px;height:2px;background:#7030a0;"></div>
<div class="vl" style="left:583px;top:214px;height:229px;"></div>
<div class="vl" style="left:681px;top:214px;height:229px;"></div>
<div class="vl" style="left:785px;top:214px;height:229px;"></div>
<div class="vl" style="left:905px;top:214px;height:229px;"></div>
<div class="abs" style="left:583px;top:467px;width:323px;height:231px;background:#fff;"></div>
<div class="t" style="left:617.29px;top:472px;font-size:15.7px;transform:scaleX(0.9408);transform-origin:center center;color:#000;">23%</div>
<div class="t" style="left:718.29px;top:472px;font-size:15.7px;transform:scaleX(0.9408);transform-origin:center center;color:#000;">22%</div>
<div class="t" style="left:832.90px;top:472px;font-size:15.7px;transform:scaleX(0.9928);transform-origin:center center;color:#000;">105</div>
<svg style="left:788px;top:469px" width="22" height="21"><path d="M6.6 19.3 H11.4 V11.2 L16.3 14.3 V7.6 L9 1.6 L1.7 7.6 V14.3 L6.6 11.2 Z" fill="#6aa58f" stroke="#2f7358" stroke-width="1.1" stroke-linejoin="round"/></svg>
<div class="t" style="left:621.65px;top:495px;font-size:15.7px;transform:scaleX(0.9208);transform-origin:center center;color:#000;">1%</div>
<div class="t" style="left:722.65px;top:495px;font-size:15.7px;transform:scaleX(0.9208);transform-origin:center center;color:#000;">2%</div>
<div class="t" style="left:837.27px;top:495px;font-size:15.7px;transform:scaleX(0.9928);transform-origin:center center;color:#000;">50</div>
<svg style="left:788px;top:492px" width="22" height="21"><path d="M6.6 1.5 H11.4 V9.6 L16.3 6.5 V13.2 L9 19.2 L1.7 13.2 V6.5 L6.6 9.6 Z" fill="#d65532" stroke="#a8330f" stroke-width="1.1" stroke-linejoin="round"/></svg>
<div class="t" style="left:617.29px;top:518px;font-size:15.7px;transform:scaleX(0.9408);transform-origin:center center;color:#000;">16%</div>
<div class="t" style="left:718.29px;top:518px;font-size:15.7px;transform:scaleX(0.9408);transform-origin:center center;color:#000;">15%</div>
<div class="t" style="left:832.90px;top:518px;font-size:15.7px;transform:scaleX(0.9928);transform-origin:center center;color:#000;">107</div>
<svg style="left:788px;top:515px" width="22" height="21"><path d="M6.6 19.3 H11.4 V11.2 L16.3 14.3 V7.6 L9 1.6 L1.7 7.6 V14.3 L6.6 11.2 Z" fill="#6aa58f" stroke="#2f7358" stroke-width="1.1" stroke-linejoin="round"/></svg>
<div class="t" style="left:617.87px;top:541px;font-size:15.7px;transform:scaleX(0.9770);transform-origin:center center;color:#000;">11%</div>
<div class="t" style="left:722.65px;top:541px;font-size:15.7px;transform:scaleX(0.9208);transform-origin:center center;color:#000;">9%</div>
<div class="t" style="left:832.90px;top:541px;font-size:15.7px;transform:scaleX(0.9928);transform-origin:center center;color:#000;">122</div>
<svg style="left:788px;top:538px" width="22" height="21"><path d="M6.6 19.3 H11.4 V11.2 L16.3 14.3 V7.6 L9 1.6 L1.7 7.6 V14.3 L6.6 11.2 Z" fill="#6aa58f" stroke="#2f7358" stroke-width="1.1" stroke-linejoin="round"/></svg>
<div class="t" style="left:608.99px;top:564px;font-size:15.7px;transform:scaleX(0.9925);transform-origin:center center;color:#000;">15.500</div>
<div class="t" style="left:709.99px;top:564px;font-size:15.7px;transform:scaleX(0.9925);transform-origin:center center;color:#000;">15.000</div>
<div class="t" style="left:837.27px;top:564px;font-size:15.7px;transform:scaleX(0.9928);transform-origin:center center;color:#000;">97</div>
<svg style="left:788px;top:561px" width="22" height="21"><path d="M0.5 7.5 H8.3 L5.5 2.5 H12.3 L18.2 9.8 L12.3 17 H5.5 L8.3 12.5 H0.5 Z" fill="#ecc583" stroke="#a87d1e" stroke-width="1.1" stroke-linejoin="round"/></svg>
<div class="hl" style="left:583px;top:467px;width:323px;"></div>
<div class="hl" style="left:583px;top:490px;width:323px;"></div>
<div class="hl" style="left:583px;top:513px;width:323px;"></div>
<div class="hl" style="left:583px;top:536px;width:323px;"></div>
<div class="hl" style="left:583px;top:559px;width:323px;"></div>
<div class="hl" style="left:583px;top:582px;width:323px;"></div>
<div class="hl" style="left:583px;top:605px;width:323px;"></div>
<div class="hl" style="left:583px;top:628px;width:323px;"></div>
<div class="hl" style="left:583px;top:651px;width:323px;"></div>
<div class="hl" style="left:583px;top:674px;width:323px;"></div>
<div class="hl" style="left:583px;top:696px;width:323px;height:2px;background:#7030a0;"></div>
<div class="vl" style="left:583px;top:467px;height:229px;"></div>
<div class="vl" style="left:681px;top:467px;height:229px;"></div>
<div class="vl" style="left:785px;top:467px;height:229px;"></div>
<div class="vl" style="left:905px;top:467px;height:229px;"></div>
<div class="abs" style="left:583px;top:720px;width:323px;height:105px;background:#fff;"></div>
<div class="t" style="left:624.27px;top:725px;font-size:15.7px;transform:scaleX(0.9928);transform-origin:center center;color:#000;">32</div>
<div class="t" style="left:725.27px;top:725px;font-size:15.7px;transform:scaleX(0.9928);transform-origin:center center;color:#000;">30</div>
<div class="t" style="left:837.27px;top:725px;font-size:15.7px;transform:scaleX(0.9928);transform-origin:center center;color:#000;">94</div>
<svg style="left:788px;top:722px" width="22" height="21"><path d="M0.5 7.5 H8.3 L5.5 2.5 H12.3 L18.2 9.8 L12.3 17 H5.5 L8.3 12.5 H0.5 Z" fill="#ecc583" stroke="#a87d1e" stroke-width="1.1" stroke-linejoin="round"/></svg>
<div class="t" style="left:624.27px;top:748px;font-size:15.7px;transform:scaleX(0.9928);transform-origin:center center;color:#000;">47</div>
<div class="t" style="left:725.27px;top:748px;font-size:15.7px;transform:scaleX(0.9928);transform-origin:center center;color:#000;">45</div>
<div class="t" style="left:837.27px;top:748px;font-size:15.7px;transform:scaleX(0.9928);transform-origin:center center;color:#000;">96</div>
<svg style="left:788px;top:745px" width="22" height="21"><path d="M0.5 7.5 H8.3 L5.5 2.5 H12.3 L18.2 9.8 L12.3 17 H5.5 L8.3 12.5 H0.5 Z" fill="#ecc583" stroke="#a87d1e" stroke-width="1.1" stroke-linejoin="round"/></svg>
<div class="t" style="left:624.27px;top:771px;font-size:15.7px;transform:scaleX(0.9928);transform-origin:center center;color:#000;">10</div>
<div class="t" style="left:725.27px;top:771px;font-size:15.7px;transform:scaleX(0.9928);transform-origin:center center;color:#000;">15</div>
<div class="t" style="left:832.90px;top:771px;font-size:15.7px;transform:scaleX(0.9928);transform-origin:center center;color:#000;">150</div>
<svg style="left:788px;top:768px" width="22" height="21"><path d="M6.6 19.3 H11.4 V11.2 L16.3 14.3 V7.6 L9 1.6 L1.7 7.6 V14.3 L6.6 11.2 Z" fill="#6aa58f" stroke="#2f7358" stroke-width="1.1" stroke-linejoin="round"/></svg>
<div class="t" style="left:617.29px;top:794px;font-size:15.7px;transform:scaleX(0.9408);transform-origin:center center;color:#000;">89%</div>
<div class="t" style="left:718.29px;top:794px;font-size:15.7px;transform:scaleX(0.9408);transform-origin:center center;color:#000;">75%</div>
<div class="t" style="left:837.27px;top:794px;font-size:15.7px;transform:scaleX(0.9928);transform-origin:center center;color:#000;">84</div>
<svg style="left:788px;top:791px" width="22" height="21"><path d="M0.5 7.5 H8.3 L5.5 2.5 H12.3 L18.2 9.8 L12.3 17 H5.5 L8.3 12.5 H0.5 Z" fill="#ecc583" stroke="#a87d1e" stroke-width="1.1" stroke-linejoin="round"/></svg>
<div class="t" style="left:628.63px;top:818px;font-size:15.7px;transform:scaleX(0.9928);transform-origin:center center;color:#000;">5</div>
<div class="t" style="left:725.27px;top:818px;font-size:15.7px;transform:scaleX(0.9928);transform-origin:center center;color:#000;">10</div>
<div class="t" style="left:832.90px;top:818px;font-size:15.7px;transform:scaleX(0.9928);transform-origin:center center;color:#000;">200</div>
<svg style="left:788px;top:814px" width="22" height="21"><path d="M6.6 19.3 H11.4 V11.2 L16.3 14.3 V7.6 L9 1.6 L1.7 7.6 V14.3 L6.6 11.2 Z" fill="#6aa58f" stroke="#2f7358" stroke-width="1.1" stroke-linejoin="round"/></svg>
<div class="hl" style="left:583px;top:720px;width:323px;"></div>
<div class="hl" style="left:583px;top:743px;width:323px;"></div>
<div class="hl" style="left:583px;top:766px;width:323px;"></div>
<div class="hl" style="left:583px;top:789px;width:323px;"></div>
<div class="hl" style="left:583px;top:812px;width:323px;"></div>
<div class="vl" style="left:583px;top:720px;height:105px;"></div>
<div class="vl" style="left:681px;top:720px;height:105px;"></div>
<div class="vl" style="left:785px;top:720px;height:105px;"></div>
<div class="vl" style="left:905px;top:720px;height:105px;"></div>
<div class="abs" style="left:937px;top:147px;width:325px;height:44px;background:#d9d9d9;"></div>
<div class="t" style="left:966.08px;top:153px;font-size:14.7px;color:#000;font-weight:bold;">Target</div>
<div class="t" style="left:971.65px;top:175px;font-size:14.7px;transform:scaleX(1.0603);transform-origin:center center;color:#000;font-weight:bold;">2022</div>
<div class="t" style="left:1067.54px;top:153px;font-size:14.7px;transform:scaleX(1.0077);transform-origin:center center;color:#000;font-weight:bold;">Actual</div>
<div class="t" style="left:1073.65px;top:175px;font-size:14.7px;transform:scaleX(1.0603);transform-origin:center center;color:#000;font-weight:bold;">2023</div>
<div class="t" style="left:1155.58px;top:153px;font-size:14.7px;transform:scaleX(1.0390);transform-origin:center center;color:#000;font-weight:bold;">Actual/Target</div>
<div class="t" style="left:1182.80px;top:175px;font-size:14.7px;transform:scaleX(1.0188);transform-origin:center center;color:#000;font-weight:bold;">Index</div>
<div class="abs" style="left:937px;top:191px;width:325px;height:23px;background:#bfc8d8;"></div>
<div class="abs" style="left:937px;top:445px;width:325px;height:22px;background:#bfc8d8;"></div>
<div class="abs" style="left:937px;top:698px;width:325px;height:22px;background:#bfc8d8;"></div>
<div class="hl" style="left:937px;top:190px;width:325px;background:#7030a0;"></div>
<div class="hl" style="left:937px;top:191px;width:325px;background:rgba(112,48,160,.4);"></div>
<div class="abs" style="left:937px;top:214px;width:325px;height:231px;background:#fff;"></div>
<div class="t" style="left:976.65px;top:219px;font-size:15.7px;transform:scaleX(0.9208);transform-origin:center center;color:#000;">8%</div>
<div class="t" style="left:1078.65px;top:219px;font-size:15.7px;transform:scaleX(0.9208);transform-origin:center center;color:#000;">6%</div>
<div class="t" style="left:1193.27px;top:219px;font-size:15.7px;transform:scaleX(0.9928);transform-origin:center center;color:#000;">75</div>
<svg style="left:1144px;top:216px" width="22" height="21"><path d="M6.6 1.5 H11.4 V9.6 L16.3 6.5 V13.2 L9 19.2 L1.7 13.2 V6.5 L6.6 9.6 Z" fill="#d65532" stroke="#a8330f" stroke-width="1.1" stroke-linejoin="round"/></svg>
<div class="t" style="left:976.65px;top:242px;font-size:15.7px;transform:scaleX(0.9208);transform-origin:center center;color:#000;">4%</div>
<div class="t" style="left:1078.65px;top:242px;font-size:15.7px;transform:scaleX(0.9208);transform-origin:center center;color:#000;">3%</div>
<div class="t" style="left:1193.27px;top:242px;font-size:15.7px;transform:scaleX(0.9928);transform-origin:center center;color:#000;">75</div>
<svg style="left:1144px;top:239px" width="22" height="21"><path d="M6.6 1.5 H11.4 V9.6 L16.3 6.5 V13.2 L9 19.2 L1.7 13.2 V6.5 L6.6 9.6 Z" fill="#d65532" stroke="#a8330f" stroke-width="1.1" stroke-linejoin="round"/></svg>
<div class="t" style="left:976.65px;top:265px;font-size:15.7px;transform:scaleX(0.9208);transform-origin:center center;color:#000;">7%</div>
<div class="t" style="left:1078.65px;top:265px;font-size:15.7px;transform:scaleX(0.9208);transform-origin:center center;color:#000;">8%</div>
<div class="t" style="left:1189.49px;top:265px;font-size:15.7px;transform:scaleX(1.0390);transform-origin:center center;color:#000;">114</div>
<svg style="left:1144px;top:262px" width="22" height="21"><path d="M6.6 19.3 H11.4 V11.2 L16.3 14.3 V7.6 L9 1.6 L1.7 7.6 V14.3 L6.6 11.2 Z" fill="#6aa58f" stroke="#2f7358" stroke-width="1.1" stroke-linejoin="round"/></svg>
<div class="t" style="left:979.27px;top:288px;font-size:15.7px;transform:scaleX(0.9928);transform-origin:center center;color:#000;">17</div>
<div class="t" style="left:1081.27px;top:288px;font-size:15.7px;transform:scaleX(0.9928);transform-origin:center center;color:#000;">15</div>
<div class="t" style="left:1189.49px;top:288px;font-size:15.7px;transform:scaleX(1.0390);transform-origin:center center;color:#000;">113</div>
<svg style="left:1144px;top:285px" width="22" height="21"><path d="M6.6 19.3 H11.4 V11.2 L16.3 14.3 V7.6 L9 1.6 L1.7 7.6 V14.3 L6.6 11.2 Z" fill="#6aa58f" stroke="#2f7358" stroke-width="1.1" stroke-linejoin="round"/></svg>
<div class="t" style="left:983.63px;top:311px;font-size:15.7px;transform:scaleX(0.9928);transform-origin:center center;color:#000;">7</div>
<div class="t" style="left:1085.63px;top:311px;font-size:15.7px;transform:scaleX(0.9928);transform-origin:center center;color:#000;">5</div>
<div class="t" style="left:1188.90px;top:311px;font-size:15.7px;transform:scaleX(0.9928);transform-origin:center center;color:#000;">140</div>
<svg style="left:1144px;top:308px" width="22" height="21"><path d="M6.6 19.3 H11.4 V11.2 L16.3 14.3 V7.6 L9 1.6 L1.7 7.6 V14.3 L6.6 11.2 Z" fill="#6aa58f" stroke="#2f7358" stroke-width="1.1" stroke-linejoin="round"/></svg>
<div class="t" style="left:983.63px;top:334px;font-size:15.7px;transform:scaleX(0.9928);transform-origin:center center;color:#000;">8</div>
<div class="t" style="left:1081.27px;top:334px;font-size:15.7px;transform:scaleX(0.9928);transform-origin:center center;color:#000;">10</div>
<div class="t" style="left:1193.27px;top:334px;font-size:15.7px;transform:scaleX(0.9928);transform-origin:center center;color:#000;">80</div>
<svg style="left:1144px;top:331px" width="22" height="21"><path d="M0.5 7.5 H8.3 L5.5 2.5 H12.3 L18.2 9.8 L12.3 17 H5.5 L8.3 12.5 H0.5 Z" fill="#ecc583" stroke="#a87d1e" stroke-width="1.1" stroke-linejoin="round"/></svg>
<div class="t" style="left:972.29px;top:357px;font-size:15.7px;transform:scaleX(0.9408);transform-origin:center center;color:#000;">22%</div>
<div class="t" style="left:1074.29px;top:357px;font-size:15.7px;transform:scaleX(0.9408);transform-origin:center center;color:#000;">20%</div>
<div class="t" style="left:1189.49px;top:357px;font-size:15.7px;transform:scaleX(1.0390);transform-origin:center center;color:#000;">110</div>
<svg style="left:1144px;top:354px" width="22" height="21"><path d="M6.6 19.3 H11.4 V11.2 L16.3 14.3 V7.6 L9 1.6 L1.7 7.6 V14.3 L6.6 11.2 Z" fill="#6aa58f" stroke="#2f7358" stroke-width="1.1" stroke-linejoin="round"/></svg>
<div class="hl" style="left:937px;top:214px;width:325px;"></div>
<div class="hl" style="left:937px;top:237px;width:325px;"></div>
<div class="hl" style="left:937px;top:260px;width:325px;"></div>
<div class="hl" style="left:937px;top:283px;width:325px;"></div>
<div class="hl" style="left:937px;top:306px;width:325px;"></div>
<div class="hl" style="left:937px;top:329px;width:325px;"></div>
<div class="hl" style="left:937px;top:352px;width:325px;"></div>
<div class="hl" style="left:937px;top:375px;width:325px;"></div>
<div class="hl" style="left:937px;top:398px;width:325px;"></div>
<div class="hl" style="left:937px;top:421px;width:325px;"></div>
<div class="hl" style="left:937px;top:443px;width:325px;height:2px;background:#7030a0;"></div>
<div class="vl" style="left:937px;top:214px;height:229px;"></div>
<div class="vl" style="left:1037px;top:214px;height:229px;"></div>
<div class="vl" style="left:1141px;top:214px;height:229px;"></div>
<div class="vl" style="left:1261px;top:214px;height:229px;"></div>
<div class="abs" style="left:937px;top:467px;width:325px;height:231px;background:#fff;"></div>
<div class="t" style="left:972.29px;top:472px;font-size:15.7px;transform:scaleX(0.9408);transform-origin:center center;color:#000;">23%</div>
<div class="t" style="left:1074.29px;top:472px;font-size:15.7px;transform:scaleX(0.9408);transform-origin:center center;color:#000;">22%</div>
<div class="t" style="left:1188.90px;top:472px;font-size:15.7px;transform:scaleX(0.9928);transform-origin:center center;color:#000;">105</div>
<svg style="left:1144px;top:469px" width="22" height="21"><path d="M6.6 19.3 H11.4 V11.2 L16.3 14.3 V7.6 L9 1.6 L1.7 7.6 V14.3 L6.6 11.2 Z" fill="#6aa58f" stroke="#2f7358" stroke-width="1.1" stroke-linejoin="round"/></svg>
<div class="t" style="left:976.65px;top:495px;font-size:15.7px;transform:scaleX(0.9208);transform-origin:center center;color:#000;">1%</div>
<div class="t" style="left:1078.65px;top:495px;font-size:15.7px;transform:scaleX(0.9208);transform-origin:center center;color:#000;">2%</div>
<div class="t" style="left:1193.27px;top:495px;font-size:15.7px;transform:scaleX(0.9928);transform-origin:center center;color:#000;">50</div>
<svg style="left:1144px;top:492px" width="22" height="21"><path d="M6.6 1.5 H11.4 V9.6 L16.3 6.5 V13.2 L9 19.2 L1.7 13.2 V6.5 L6.6 9.6 Z" fill="#d65532" stroke="#a8330f" stroke-width="1.1" stroke-linejoin="round"/></svg>
<div class="t" style="left:972.29px;top:518px;font-size:15.7px;transform:scaleX(0.9408);transform-origin:center center;color:#000;">16%</div>
<div class="t" style="left:1074.29px;top:518px;font-size:15.7px;transform:scaleX(0.9408);transform-origin:center center;color:#000;">15%</div>
<div class="t" style="left:1188.90px;top:518px;font-size:15.7px;transform:scaleX(0.9928);transform-origin:center center;color:#000;">107</div>
<svg style="left:1144px;top:515px" width="22" height="21"><path d="M6.6 19.3 H11.4 V11.2 L16.3 14.3 V7.6 L9 1.6 L1.7 7.6 V14.3 L6.6 11.2 Z" fill="#6aa58f" stroke="#2f7358" stroke-width="1.1" stroke-linejoin="round"/></svg>
<div class="t" style="left:972.87px;top:541px;font-size:15.7px;transform:scaleX(0.9770);transform-origin:center center;color:#000;">11%</div>
<div class="t" style="left:1078.65px;top:541px;font-size:15.7px;transform:scaleX(0.9208);transform-origin:center center;color:#000;">9%</div>
<div class="t" style="left:1188.90px;top:541px;font-size:15.7px;transform:scaleX(0.9928);transform-origin:center center;color:#000;">122</div>
<svg style="left:1144px;top:538px" width="22" height="21"><path d="M6.6 19.3 H11.4 V11.2 L16.3 14.3 V7.6 L9 1.6 L1.7 7.6 V14.3 L6.6 11.2 Z" fill="#6aa58f" stroke="#2f7358" stroke-width="1.1" stroke-linejoin="round"/></svg>
<div class="t" style="left:963.99px;top:564px;font-size:15.7px;transform:scaleX(0.9925);transform-origin:center center;color:#000;">15.500</div>
<div class="t" style="left:1065.99px;top:564px;font-size:15.7px;transform:scaleX(0.9925);transform-origin:center center;color:#000;">15.000</div>
<div class="t" style="left:1193.27px;top:564px;font-size:15.7px;transform:scaleX(0.9928);transform-origin:center center;color:#000;">97</div>
<svg style="left:1144px;top:561px" width="22" height="21"><path d="M0.5 7.5 H8.3 L5.5 2.5 H12.3 L18.2 9.8 L12.3 17 H5.5 L8.3 12.5 H0.5 Z" fill="#ecc583" stroke="#a87d1e" stroke-width="1.1" stroke-linejoin="round"/></svg>
<div class="hl" style="left:937px;top:467px;width:325px;"></div>
<div class="hl" style="left:937px;top:490px;width:325px;"></div>
<div class="hl" style="left:937px;top:513px;width:325px;"></div>
<div class="hl" style="left:937px;top:536px;width:325px;"></div>
<div class="hl" style="left:937px;top:559px;width:325px;"></div>
<div class="hl" style="left:937px;top:582px;width:325px;"></div>
<div class="hl" style="left:937px;top:605px;width:325px;"></div>
<div class="hl" style="left:937px;top:628px;width:325px;"></div>
<div class="hl" style="left:937px;top:651px;width:325px;"></div>
<div class="hl" style="left:937px;top:674px;width:325px;"></div>
<div class="hl" style="left:937px;top:696px;width:325px;height:2px;background:#7030a0;"></div>
<div class="vl" style="left:937px;top:467px;height:229px;"></div>
<div class="vl" style="left:1037px;top:467px;height:229px;"></div>
<div class="vl" style="left:1141px;top:467px;height:229px;"></div>
<div class="vl" style="left:1261px;top:467px;height:229px;"></div>
<div class="abs" style="left:937px;top:720px;width:325px;height:105px;background:#fff;"></div>
<div class="t" style="left:979.27px;top:725px;font-size:15.7px;transform:scaleX(0.9928);transform-origin:center center;color:#000;">32</div>
<div class="t" style="left:1081.27px;top:725px;font-size:15.7px;transform:scaleX(0.9928);transform-origin:center center;color:#000;">30</div>
<div class="t" style="left:1193.27px;top:725px;font-size:15.7px;transform:scaleX(0.9928);transform-origin:center center;color:#000;">94</div>
<svg style="left:1144px;top:722px" width="22" height="21"><path d="M0.5 7.5 H8.3 L5.5 2.5 H12.3 L18.2 9.8 L12.3 17 H5.5 L8.3 12.5 H0.5 Z" fill="#ecc583" stroke="#a87d1e" stroke-width="1.1" stroke-linejoin="round"/></svg>
<div class="t" style="left:979.27px;top:748px;font-size:15.7px;transform:scaleX(0.9928);transform-origin:center center;color:#000;">47</div>
<div class="t" style="left:1081.27px;top:748px;font-size:15.7px;transform:scaleX(0.9928);transform-origin:center center;color:#000;">45</div>
<div class="t" style="left:1193.27px;top:748px;font-size:15.7px;transform:scaleX(0.9928);transform-origin:center center;color:#000;">96</div>
<svg style="left:1144px;top:745px" width="22" height="21"><path d="M0.5 7.5 H8.3 L5.5 2.5 H12.3 L18.2 9.8 L12.3 17 H5.5 L8.3 12.5 H0.5 Z" fill="#ecc583" stroke="#a87d1e" stroke-width="1.1" stroke-linejoin="round"/></svg>
<div class="t" style="left:979.27px;top:771px;font-size:15.7px;transform:scaleX(0.9928);transform-origin:center center;color:#000;">10</div>
<div class="t" style="left:1081.27px;top:771px;font-size:15.7px;transform:scaleX(0.9928);transform-origin:center center;color:#000;">15</div>
<div class="t" style="left:1188.90px;top:771px;font-size:15.7px;transform:scaleX(0.9928);transform-origin:center center;color:#000;">150</div>
<svg style="left:1144px;top:768px" width="22" height="21"><path d="M6.6 19.3 H11.4 V11.2 L16.3 14.3 V7.6 L9 1.6 L1.7 7.6 V14.3 L6.6 11.2 Z" fill="#6aa58f" stroke="#2f7358" stroke-width="1.1" stroke-linejoin="round"/></svg>
<div class="t" style="left:972.29px;top:794px;font-size:15.7px;transform:scaleX(0.9408);transform-origin:center center;color:#000;">89%</div>
<div class="t" style="left:1074.29px;top:794px;font-size:15.7px;transform:scaleX(0.9408);transform-origin:center center;color:#000;">75%</div>
<div class="t" style="left:1193.27px;top:794px;font-size:15.7px;transform:scaleX(0.9928);transform-origin:center center;color:#000;">84</div>
<svg style="left:1144px;top:791px" width="22" height="21"><path d="M0.5 7.5 H8.3 L5.5 2.5 H12.3 L18.2 9.8 L12.3 17 H5.5 L8.3 12.5 H0.5 Z" fill="#ecc583" stroke="#a87d1e" stroke-width="1.1" stroke-linejoin="round"/></svg>
<div class="t" style="left:983.63px;top:818px;font-size:15.7px;transform:scaleX(0.9928);transform-origin:center center;color:#000;">5</div>
<div class="t" style="left:1081.27px;top:818px;font-size:15.7px;transform:scaleX(0.9928);transform-origin:center center;color:#000;">10</div>
<div class="t" style="left:1188.90px;top:818px;font-size:15.7px;transform:scaleX(0.9928);transform-origin:center center;color:#000;">200</div>
<svg style="left:1144px;top:814px" width="22" height="21"><path d="M6.6 19.3 H11.4 V11.2 L16.3 14.3 V7.6 L9 1.6 L1.7 7.6 V14.3 L6.6 11.2 Z" fill="#6aa58f" stroke="#2f7358" stroke-width="1.1" stroke-linejoin="round"/></svg>
<div class="hl" style="left:937px;top:720px;width:325px;"></div>
<div class="hl" style="left:937px;top:743px;width:325px;"></div>
<div class="hl" style="left:937px;top:766px;width:325px;"></div>
<div class="hl" style="left:937px;top:789px;width:325px;"></div>
<div class="hl" style="left:937px;top:812px;width:325px;"></div>
<div class="vl" style="left:937px;top:720px;height:105px;"></div>
<div class="vl" style="left:1037px;top:720px;height:105px;"></div>
<div class="vl" style="left:1141px;top:720px;height:105px;"></div>
<div class="vl" style="left:1261px;top:720px;height:105px;"></div>
<div class="abs" style="left:1300px;top:147px;width:209px;height:44px;background:#d9d9d9;"></div>
<div class="hl" style="left:1300px;top:190px;width:209px;background:#7030a0;"></div>
<div class="hl" style="left:1300px;top:191px;width:209px;background:rgba(112,48,160,.45);"></div>
<div class="t" style="left:1364.97px;top:153px;font-size:14.7px;transform:scaleX(0.9927);transform-origin:center center;color:#000;font-weight:bold;">Index Level</div>
<div class="t" style="left:1353.54px;top:175px;font-size:14.7px;color:#000;font-weight:bold;">Color Intervals</div>
<div class="abs" style="left:1300px;top:191px;width:209px;height:70px;background:#fff;"></div>
<div class="abs" style="left:1301px;top:192px;width:109px;height:22px;background:#c9d1df;"></div>
<div class="t" style="left:1334.76px;top:197px;font-size:14.7px;transform:scaleX(1.0164);transform-origin:center center;color:#000;font-weight:bold;">Green</div>
<div class="t" style="left:1457.55px;top:197px;font-size:14.7px;transform:scaleX(1.0696);transform-origin:center center;color:#000;">-</div>
<div class="abs" style="left:1301px;top:215px;width:109px;height:22px;background:#c9d1df;"></div>
<div class="t" style="left:1333.12px;top:220px;font-size:14.7px;transform:scaleX(1.0149);transform-origin:center center;color:#000;font-weight:bold;">Yellow</div>
<div class="t" style="left:1447.74px;top:220px;font-size:14.7px;transform:scaleX(1.0603);transform-origin:center center;color:#000;">100</div>
<div class="abs" style="left:1301px;top:238px;width:109px;height:22px;background:#c9d1df;"></div>
<div class="t" style="left:1342.11px;top:243px;font-size:14.7px;transform:scaleX(0.9782);transform-origin:center center;color:#000;font-weight:bold;">Red</div>
<div class="t" style="left:1451.82px;top:243px;font-size:14.7px;transform:scaleX(1.0603);transform-origin:center center;color:#000;">80</div>
<div class="hl" style="left:1300px;top:214px;width:209px;"></div>
<div class="hl" style="left:1300px;top:237px;width:209px;"></div>
<div class="hl" style="left:1300px;top:260px;width:209px;"></div>
<div class="vl" style="left:1300px;top:192px;height:69px;"></div>
<div class="vl" style="left:1410px;top:192px;height:69px;"></div>
<div class="vl" style="left:1508px;top:192px;height:69px;"></div>
<div class="abs" style="left:1301px;top:285px;width:262px;height:296px;background:#d6dce6;box-shadow:0 0 7px 0.5px rgba(0,0,0,.6)"></div>
<div class="t" style="left:1305.70px;top:295px;font-size:13.1px;transform:scaleX(0.9499);transform-origin:left center;color:#262626;font-weight:bold;font-style:italic;">DASHBOARD</div>
<div class="abs" style="left:1306px;top:340px;width:4px;height:4px;background:#262626;border-radius:2px;"></div>
<div class="t" style="left:1318.50px;top:336px;font-size:13.1px;transform:scaleX(1.0496);transform-origin:left center;color:#262626;font-style:italic;-webkit-text-stroke:0;">Choose the month that you would like</div>
<div class="t" style="left:1318.50px;top:352px;font-size:13.1px;transform:scaleX(1.0610);transform-origin:left center;color:#262626;font-style:italic;-webkit-text-stroke:0;">to display it's properties from the cell</div>
<div class="t" style="left:1318.50px;top:369px;font-size:13.1px;transform:scaleX(1.0616);transform-origin:left center;color:#262626;font-style:italic;-webkit-text-stroke:0;">where blue arrow points.</div>
<div class="abs" style="left:1306px;top:395px;width:4px;height:4px;background:#262626;border-radius:2px;"></div>
<div class="t" style="left:1318.50px;top:391px;font-size:13.1px;transform:scaleX(1.0344);transform-origin:left center;color:#262626;font-style:italic;-webkit-text-stroke:0;">Once selected the calculations will be</div>
<div class="t" style="left:1318.50px;top:407px;font-size:13.1px;transform:scaleX(1.0603);transform-origin:left center;color:#262626;font-style:italic;-webkit-text-stroke:0;">done automatically. The one with the</div>
<div class="t" style="left:1318.50px;top:424px;font-size:13.1px;transform:scaleX(1.0419);transform-origin:left center;color:#262626;font-style:italic;-webkit-text-stroke:0;">lower better cases (which you stated in</div>
<div class="t" style="left:1318.50px;top:440px;font-size:13.1px;transform:scaleX(1.0516);transform-origin:left center;color:#262626;font-style:italic;-webkit-text-stroke:0;">settings &gt; Metric info section ) will be</div>
<div class="t" style="left:1318.50px;top:457px;font-size:13.1px;transform:scaleX(1.0591);transform-origin:left center;color:#262626;font-style:italic;-webkit-text-stroke:0;">calculated distinctively.</div>
<div class="abs" style="left:1306px;top:483px;width:4px;height:4px;background:#262626;border-radius:2px;"></div>
<div class="t" style="left:1318.50px;top:479px;font-size:13.1px;transform:scaleX(1.0355);transform-origin:left center;color:#262626;font-style:italic;-webkit-text-stroke:0;">You may change the name of the</div>
<div class="t" style="left:1318.50px;top:496px;font-size:13.1px;transform:scaleX(1.0403);transform-origin:left center;color:#262626;font-style:italic;-webkit-text-stroke:0;">categories.</div>
<div class="abs" style="left:1306px;top:522px;width:4px;height:4px;background:#262626;border-radius:2px;"></div>
<div class="t" style="left:1318.50px;top:518px;font-size:13.1px;transform:scaleX(1.0577);transform-origin:left center;color:#262626;font-style:italic;-webkit-text-stroke:0;">If there is no proper format on the cell</div>
<div class="t" style="left:1318.50px;top:535px;font-size:13.1px;transform:scaleX(1.0336);transform-origin:left center;color:#262626;font-style:italic;-webkit-text-stroke:0;">you may select the cell and change its</div>
<div class="t" style="left:1318.50px;top:551px;font-size:13.1px;transform:scaleX(1.1192);transform-origin:left center;color:#262626;font-style:italic;-webkit-text-stroke:0;">format.</div>
</div>
<!-- v scrollbar -->
<div class="abs" style="left:1897px;top:188px;width:21px;height:826px;background:#f5f5f5;border-radius:10.5px"></div>
<svg style="left:1902px;top:193px" width="11" height="9"><path d="M5.5 0.8L10.4 7.6a0.6 0.6 0 0 1-0.5 0.9H1.1a0.6 0.6 0 0 1-0.5-0.9Z" fill="#707070"/></svg>
<div class="abs" style="left:1902px;top:209px;width:11px;height:391px;background:#707070;border-radius:5.5px"></div>
<svg style="left:1902px;top:999px" width="11" height="9"><path d="M5.5 8.2L10.4 1.4a0.6 0.6 0 0 0-0.5-0.9H1.1a0.6 0.6 0 0 0-0.5 0.9Z" fill="#707070"/></svg>
<!-- tab row -->
<div class="abs" style="left:0;top:1012px;width:1920px;height:40px;background:#e6e6e6"></div>
<svg style="left:30px;top:1024px" width="10" height="15"><path d="M8.5 1L1.8 7.5L8.5 14" fill="none" stroke="#333" stroke-width="1.4"/></svg>
<svg style="left:71px;top:1024px" width="10" height="15"><path d="M1.5 1L8.2 7.5L1.5 14" fill="none" stroke="#a0a0a0" stroke-width="1.4"/></svg>
<svg style="left:108px;top:1029px" width="15" height="4" fill="#333"><circle cx="2" cy="2" r="1.6"/><circle cx="7.5" cy="2" r="1.6"/><circle cx="13" cy="2" r="1.6"/></svg>
<div class="abs" style="left:141px;top:1017px;width:152px;height:30px;background:#dbe2f3;border-radius:5.5px"></div>
<div class="t" style="left:152.50px;top:1025px;font-size:17.2px;transform:scaleX(0.9863);transform-origin:left center;color:#1a1a1a;">Target_Database</div>
<div class="abs" style="left:298px;top:1020px;width:1px;height:24px;background:#d2d2d2"></div>
<div class="abs" style="left:304px;top:1017px;width:167px;height:30px;background:#a6a6a6;border-radius:5.5px"></div>
<div class="t" style="left:315.50px;top:1025px;font-size:17.2px;color:#1a1a1a;">Cumulative_Actual</div>
<div class="abs" style="left:476px;top:1020px;width:1px;height:24px;background:#d2d2d2"></div>
<div class="abs" style="left:482px;top:1017px;width:168px;height:30px;background:#a6a6a6;border-radius:5.5px"></div>
<div class="t" style="left:494.70px;top:1025px;font-size:17.2px;color:#1a1a1a;">Cumulative_Target</div>
<div class="abs" style="left:655px;top:1020px;width:1px;height:24px;background:#d2d2d2"></div>
<div class="abs" style="left:661px;top:1017px;width:143px;height:30px;background:#7030a0;border-radius:5.5px"></div>
<div class="t" style="left:672.50px;top:1025px;font-size:17.2px;transform:scaleX(0.9898);transform-origin:left center;color:#fff;">Metric_Analysis</div>
<div class="abs" style="left:810px;top:1020px;width:1px;height:24px;background:#d2d2d2"></div>
<div class="abs" style="left:815px;top:1012px;width:140px;height:35px;background:linear-gradient(#ffffff 0%,#fffdf8 45%,#fdf1d8 100%);border-radius:0 0 7px 7px;box-shadow:0 1px 2px rgba(0,0,0,.12)"></div>
<div class="abs" style="left:811px;top:1012px;width:4px;height:4px;background:radial-gradient(circle at 0% 100%,#e6e6e6 0,#e6e6e6 3.5px,#fff 4.3px)"></div>
<div class="abs" style="left:955px;top:1012px;width:4px;height:4px;background:radial-gradient(circle at 100% 100%,#e6e6e6 0,#e6e6e6 3.5px,#fff 4.3px)"></div>
<div class="t" style="left:825.40px;top:1021px;font-size:17.6px;transform:scaleX(0.9808);transform-origin:left center;color:#1a1a1a;-webkit-text-stroke:0.4px #1a1a1a;">Kpi_Dashboard</div>
<div class="abs" style="left:825px;top:1042px;width:120px;height:2px;background:#1e7b3e"></div>
<div class="abs" style="left:960px;top:1020px;width:1px;height:24px;background:#d2d2d2"></div>
<div class="t" style="left:977.50px;top:1025px;font-size:17.2px;transform:scaleX(1.0135);transform-origin:left center;color:#1a1a1a;">ToU</div>
<div class="abs" style="left:1023px;top:1020px;width:1px;height:24px;background:#d2d2d2"></div>
<svg style="left:1076px;top:1024px" width="15" height="15"><path d="M7.5 0.5V14.5M0.5 7.5H14.5" stroke="#8a8a8a" stroke-width="1.2"/></svg>
<svg style="left:1154px;top:1025px" width="4" height="15" fill="#333"><circle cx="2" cy="2" r="1.4"/><circle cx="2" cy="7.3" r="1.4"/><circle cx="2" cy="12.6" r="1.4"/></svg>
<div class="abs" style="left:1176px;top:1021px;width:719px;height:21px;background:#f5f5f5;border-radius:10.5px"></div>
<svg style="left:1182px;top:1026px" width="9" height="11"><path d="M0.8 5.5L7.6 0.6a0.6 0.6 0 0 1 0.9 0.5v8.8a0.6 0.6 0 0 1-0.9 0.5Z" fill="#707070"/></svg>
<div class="abs" style="left:1197px;top:1026px;width:401px;height:11px;background:#707070;border-radius:5.5px"></div>
<svg style="left:1880px;top:1026px" width="9" height="11"><path d="M8.2 5.5L1.4 0.6a0.6 0.6 0 0 0-0.9 0.5v8.8a0.6 0.6 0 0 0 0.9 0.5Z" fill="#707070"/></svg>
<!-- status bar -->
<div class="abs" style="left:0;top:1052px;width:1920px;height:28px;background:#f3f3f3"></div>
<div class="t" style="left:9.00px;top:1060px;font-size:13.3px;transform:scaleX(0.9364);transform-origin:left center;color:#333;">Ready</div>
<svg style="left:69px;top:1057px" width="20" height="18" fill="none" stroke="#444" stroke-width="1.2"><path d="M1 1.2H18V6M1 1.2V14.5H8M1 4.5H18M3.5 8H7M3.5 11H6.5"/><circle cx="13.2" cy="11.5" r="4.6"/><circle cx="13.2" cy="11.5" r="1.8" fill="#444"/></svg>
<svg style="left:109px;top:1056px" width="20" height="19" fill="none" stroke="#444" stroke-width="1.2" stroke-linecap="round" stroke-linejoin="round"><circle cx="8.5" cy="3" r="1.9"/><path d="M1.5 6.2L6.5 7.5V11L4 17.5M15.5 6.2L10.5 7.5V10M6.5 11H10.5"/><path d="M11.5 12L18 18M18 12L11.5 18"/></svg>
<div class="t" style="left:132.00px;top:1060px;font-size:13.3px;transform:scaleX(0.9574);transform-origin:left center;color:#333;">Accessibility: Investigate</div>
<div class="abs" style="left:1548px;top:1053px;width:50px;height:27px;background:#dcdcdc"></div>
<svg style="left:1564px;top:1057px" width="17" height="17" fill="none" stroke="#3a3a3a" stroke-width="1.4"><rect x="0.8" y="0.8" width="15.4" height="15.4"/><path d="M6 0.8V16.2M11 0.8V16.2M0.8 6H16.2M0.8 11H16.2"/></svg>
<svg style="left:1614px;top:1057px" width="18" height="18" fill="none" stroke="#3a3a3a" stroke-width="1.3"><rect x="0.8" y="0.8" width="16.4" height="15.4" rx="1"/><rect x="4.6" y="3.6" width="8.8" height="9.8"/><path d="M6.6 6.5H11.4M6.6 8.5H11.4M6.6 10.5H11.4"/></svg>
<svg style="left:1664px;top:1057px" width="18" height="17" fill="none" stroke="#3a3a3a" stroke-width="1.3"><rect x="0.8" y="0.8" width="16.4" height="15.2" rx="1"/><path d="M0.8 8.8H11V0.8M6 0.8V8.8"/></svg>
<svg style="left:1704px;top:1065px" width="11" height="2"><path d="M0 1H10" stroke="#333" stroke-width="1.2"/></svg>
<div class="abs" style="left:1721px;top:1066px;width:125px;height:1px;background:#6a6a6a"></div>
<div class="abs" style="left:1774px;top:1059px;width:6px;height:14px;background:#666;border-radius:1px"></div>
<div class="abs" style="left:1783px;top:1063px;width:1px;height:7px;background:#6a6a6a"></div>
<svg style="left:1851px;top:1061px" width="11" height="11"><path d="M5.5 0.5V10.5M0.5 5.5H10.5" stroke="#333" stroke-width="1.2"/></svg>
<div class="t" style="left:1878.00px;top:1060px;font-size:13.3px;transform:scaleX(0.9579);transform-origin:left center;color:#333;">%90</div>

</div>
</body></html>
